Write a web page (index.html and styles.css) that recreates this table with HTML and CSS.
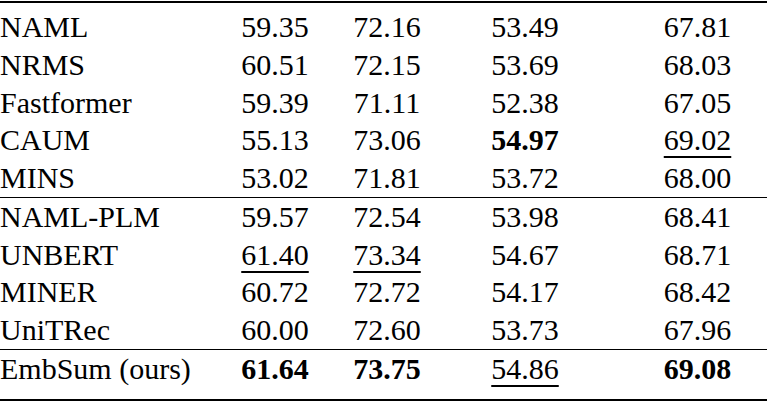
FILE: index.html
```html
<!DOCTYPE html>
<html lang="en">
<head>
    <meta charset="UTF-8">
    <meta name="viewport" content="width=device-width, initial-scale=1.0">
    <title>Results</title>
    <link rel="stylesheet" href="styles.css">
</head>
<body>
    <table class="results">
        <colgroup>
            <col class="col-model">
            <col class="col-a">
            <col class="col-b">
            <col class="col-c">
            <col class="col-d">
        </colgroup>
        <tbody class="group first-group">
            <tr><td>NAML</td><td>59.35</td><td>72.16</td><td>53.49</td><td class="last">67.81</td></tr>
            <tr><td>NRMS</td><td>60.51</td><td>72.15</td><td>53.69</td><td class="last">68.03</td></tr>
            <tr><td>Fastformer</td><td>59.39</td><td>71.11</td><td>52.38</td><td class="last">67.05</td></tr>
            <tr><td>CAUM</td><td>55.13</td><td>73.06</td><td><b>54.97</b></td><td class="last"><u>69.02</u></td></tr>
            <tr><td>MINS</td><td>53.02</td><td>71.81</td><td>53.72</td><td class="last">68.00</td></tr>
        </tbody>
        <tbody class="group">
            <tr><td>NAML-PLM</td><td>59.57</td><td>72.54</td><td>53.98</td><td class="last">68.41</td></tr>
            <tr><td>UNBERT</td><td><u>61.40</u></td><td><u>73.34</u></td><td>54.67</td><td class="last">68.71</td></tr>
            <tr><td>MINER</td><td>60.72</td><td>72.72</td><td>54.17</td><td class="last">68.42</td></tr>
            <tr><td>UniTRec</td><td>60.00</td><td>72.60</td><td>53.73</td><td class="last">67.96</td></tr>
        </tbody>
        <tbody class="group last-group">
            <tr><td>EmbSum (ours)</td><td><b>61.64</b></td><td><b>73.75</b></td><td><u>54.86</u></td><td class="last"><b>69.08</b></td></tr>
        </tbody>
    </table>
</body>
</html>
```

FILE: styles.css
```css
* {
    box-sizing: border-box;
}

body {
    margin: 0;
    background: #fff;
    color: #000;
    font-family: 'Liberation Serif', 'Times New Roman', serif;
}

.results {
    width: 767px;
    margin-top: 1px;
    border-collapse: collapse;
    table-layout: fixed;
    border-top: 2px solid #000;
    border-bottom: 2px solid #000;
    font-size: 30px;
}

.col-model { width: 222px; }
.col-a { width: 106px; }
.col-b { width: 118px; }
.col-c { width: 158px; }
.col-d { width: 163px; }

.results td {
    padding: 0;
    height: 37.75px;
    line-height: 37.75px;
    text-align: center;
    white-space: nowrap;
}

.results td:first-child {
    text-align: left;
}

.results td.last {
    padding-left: 24px;
}

.group + .group {
    border-top: 1px solid #000;
}

.first-group tr:first-child td {
    padding-top: 5px;
    height: 42.75px;
}

.last-group tr:last-child td {
    padding-bottom: 11px;
    height: 48.75px;
}

b {
    font-weight: bold;
}

u {
    text-decoration: underline;
    text-decoration-thickness: 1.5px;
    text-underline-offset: 6px;
}
```
